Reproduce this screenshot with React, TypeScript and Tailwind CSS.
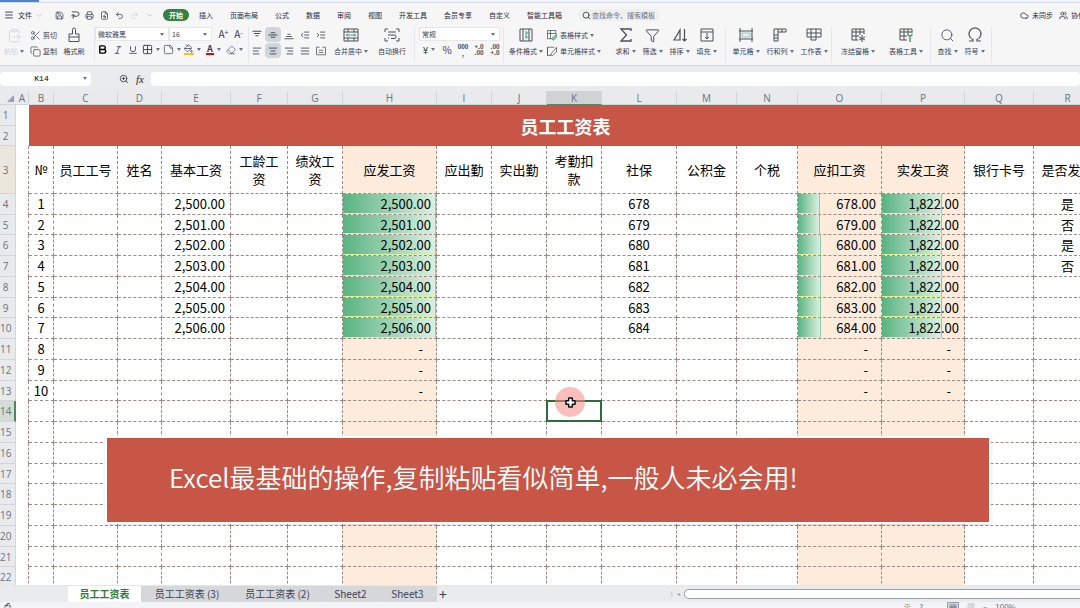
import type { ReactNode } from "react";
import {
  AlignCenter,
  AlignJustify,
  AlignLeft,
  AlignRight,
  Bold,
  ChevronDown,
  Cloud,
  Copy,
  Eraser,
  FileSearch,
  Filter,
  Grid2x2,
  Italic,
  ListIndentDecrease,
  ListIndentIncrease,
  Menu,
  PaintBucket,
  Printer,
  Redo2,
  Save,
  Scissors,
  Search,
  StickyNote,
  Underline,
  Undo2,
  Users,
  ZoomIn,
  ClipboardPaste,
} from "lucide-react";

type Row = {
  no?: string;
  base?: number;
  social?: number;
  deduct?: number;
  net?: number;
  issued?: string;
};

const MENUS = [
  "插入",
  "页面布局",
  "公式",
  "数据",
  "审阅",
  "视图",
  "开发工具",
  "会员专享",
  "自定义",
  "智能工具箱",
];

const COLUMNS = [
  { letter: "A", width: "w-[13px]", title: "" },
  { letter: "B", width: "w-[25px]", title: "№" },
  { letter: "C", width: "w-[64px]", title: "员工工号" },
  { letter: "D", width: "w-[44px]", title: "姓名" },
  { letter: "E", width: "w-[69px]", title: "基本工资" },
  { letter: "F", width: "w-[57px]", title: "工龄工资" },
  { letter: "G", width: "w-[55px]", title: "绩效工资" },
  { letter: "H", width: "w-[94px]", title: "应发工资" },
  { letter: "I", width: "w-[55px]", title: "应出勤" },
  { letter: "J", width: "w-[55px]", title: "实出勤" },
  { letter: "K", width: "w-[55px]", title: "考勤扣款" },
  { letter: "L", width: "w-[75px]", title: "社保" },
  { letter: "M", width: "w-[60px]", title: "公积金" },
  { letter: "N", width: "w-[61px]", title: "个税" },
  { letter: "O", width: "w-[84px]", title: "应扣工资" },
  { letter: "P", width: "w-[83px]", title: "实发工资" },
  { letter: "Q", width: "w-[69px]", title: "银行卡号" },
  { letter: "R", width: "w-[68px]", title: "是否发放" },
];

const BAR_MAX = 2506;
const ISSUED = ["是", "否", "是", "否"];

// sheet rows 4 to 22
const ROWS: Row[] = Array.from({ length: 19 }, (_, i) => {
  if (i < 7) {
    return {
      no: String(i + 1),
      base: 2500 + i,
      social: 678 + i,
      deduct: 678 + i,
      net: 1822,
      issued: ISSUED[i],
    };
  }
  if (i < 10) return { no: String(i + 1) };
  return {};
});

const money = (value: number) =>
  value.toLocaleString("en-US", { minimumFractionDigits: 2 });

const Caret = () => (
  <svg viewBox="0 0 4 3" className="h-[3px] w-1 shrink-0 fill-gray-500">
    <path d="M0 0h4L2 3z" />
  </svg>
);

const Drawing = ({
  children,
  className = "size-4",
}: {
  children: ReactNode;
  className?: string;
}) => (
  <svg
    viewBox="0 0 16 16"
    fill="none"
    stroke="#4b5055"
    strokeWidth="1"
    className={`shrink-0 ${className}`}
  >
    {children}
  </svg>
);

const Tool = ({
  label,
  width,
  caret = true,
  muted = false,
  children,
}: {
  label: string;
  width: string;
  caret?: boolean;
  muted?: boolean;
  children: ReactNode;
}) => (
  <button
    className={`flex shrink-0 flex-col items-center gap-[3px] ${width} ${
      muted ? "text-gray-300" : "text-gray-700"
    }`}
  >
    <span className="flex h-4 items-center">{children}</span>
    <span className="flex items-center gap-0.5 whitespace-nowrap leading-[10px]">
      {label}
      {caret && <Caret />}
    </span>
  </button>
);

const SmallTool = ({
  label,
  caret = false,
  children,
}: {
  label: string;
  caret?: boolean;
  children: ReactNode;
}) => (
  <button className="flex h-4 items-center gap-0.5 whitespace-nowrap text-gray-700">
    {children}
    {label}
    {caret && <Caret />}
  </button>
);

const IconButton = ({
  label,
  width = "w-4",
  caret = false,
  active = false,
  children,
}: {
  label: string;
  width?: string;
  caret?: boolean;
  active?: boolean;
  children: ReactNode;
}) => (
  <button
    aria-label={label}
    className={`flex h-[15px] shrink-0 items-center justify-center gap-[3px] rounded-sm ${width} ${
      active ? "bg-gray-300" : ""
    }`}
  >
    {children}
    {caret && <Caret />}
  </button>
);

const Picker = ({
  label,
  value,
  width,
}: {
  label: string;
  value: string;
  width: string;
}) => (
  <label
    className={`relative flex h-[14px] items-center border border-gray-200 bg-white ${width}`}
  >
    <select
      aria-label={label}
      className="w-full appearance-none bg-transparent pl-0.5 leading-3 outline-none"
    >
      <option>{value}</option>
    </select>
    <span className="pointer-events-none absolute right-1">
      <Caret />
    </span>
  </label>
);

const Divider = () => <div className="h-9 w-px shrink-0 bg-gray-200" />;

const MenuBar = () => (
  <nav className="flex h-6 items-center whitespace-nowrap text-[7px] text-gray-800">
    <button className="flex w-[52px] items-center gap-1 pl-1">
      <Menu className="size-[10px]" />
      文件
      <ChevronDown className="size-[7px] text-gray-400" />
    </button>
    <div className="flex w-[105px] items-center text-gray-700">
      <IconButton label="保存" width="w-[15px]">
        <Save className="size-[9px]" />
      </IconButton>
      <IconButton label="输出为PDF" width="w-[15px]">
        <Drawing className="size-[10px]">
          <path d="M3 3h7a4 3 0 010 7H5M5 7v7M2 10l3-3 3 3" strokeWidth="1.6" />
        </Drawing>
      </IconButton>
      <IconButton label="打印" width="w-[15px]">
        <Printer className="size-[9px]" />
      </IconButton>
      <IconButton label="打印预览" width="w-[15px]">
        <FileSearch className="size-[9px]" />
      </IconButton>
      <IconButton label="撤销" width="w-[15px]">
        <Undo2 className="size-[9px]" />
      </IconButton>
      <IconButton label="恢复" width="w-[15px]">
        <Redo2 className="size-[9px] text-gray-300" />
      </IconButton>
      <IconButton label="更多" width="w-[15px]">
        <ChevronDown className="size-[7px] text-gray-400" />
      </IconButton>
    </div>
    <button className="ml-1.5 h-3 w-[26px] rounded-full bg-[#35823f] font-bold text-white">
      开始
    </button>
    <div className="ml-[10px] flex gap-[17px]">
      {MENUS.map((menu) => (
        <button key={menu}>{menu}</button>
      ))}
    </div>
    <label className="ml-4 flex h-3 w-[82px] items-center gap-px rounded-full bg-[#eeefef] px-1">
      <Search className="size-[9px] shrink-0" />
      <input
        aria-label="查找命令"
        placeholder="查找命令、搜索模板"
        className="w-full bg-transparent outline-none placeholder:text-gray-500"
      />
    </label>
    <div className="ml-auto flex shrink-0 items-center">
      <button className="flex items-center gap-[3px]">
        <Cloud className="size-[9px]" />
        未同步
      </button>
      <button className="ml-1.5 flex w-[21px] items-center gap-[3px] overflow-hidden">
        <Users className="size-[9px] shrink-0" />
        协作
      </button>
    </div>
  </nav>
);

const Ribbon = () => (
  <div className="flex h-[38px] items-start overflow-hidden text-[7px] text-gray-700">
    {/* Clipboard */}
    <div className="flex w-[94px] shrink-0">
      <Tool label="粘贴" width="w-7" muted>
        <ClipboardPaste className="size-[15px]" strokeWidth={1.5} />
      </Tool>
      <div className="flex w-[34px] flex-col pl-0.5">
        <SmallTool label="剪切">
          <Scissors className="size-[11px]" strokeWidth={1.5} />
        </SmallTool>
        <SmallTool label="复制">
          <Copy className="size-[11px]" strokeWidth={1.5} />
        </SmallTool>
      </div>
      <Tool label="格式刷" width="w-6" caret={false}>
        <Drawing>
          <path d="M6.5 7V2.5a1.5 1.5 0 013 0V7H13v7.5H3V7zM3 10h10" />
        </Drawing>
      </Tool>
    </div>
    <Divider />
    {/* Font */}
    <div className="flex w-[153px] shrink-0 flex-col gap-px">
      <div className="flex items-center">
        <Picker label="字体" value="微软雅黑" width="w-[74px]" />
        <Picker label="字号" value="16" width="w-[43px]" />
        <button className="ml-1 w-[15px] text-[10px] leading-[14px]">
          A<sup className="text-[7px]">+</sup>
        </button>
        <button className="w-[15px] text-[10px] leading-[14px]">
          A<sup className="text-[7px]">-</sup>
        </button>
      </div>
      <div className="flex">
        <IconButton label="加粗" width="w-[15px]">
          <Bold className="size-[11px] text-black" strokeWidth={3} />
        </IconButton>
        <IconButton label="倾斜" width="w-[15px]">
          <Italic className="size-[10px]" />
        </IconButton>
        <IconButton label="下划线" width="w-[15px]">
          <Underline className="size-[10px]" />
        </IconButton>
        <IconButton label="边框" width="w-[21px]" caret>
          <Grid2x2 className="size-[11px]" />
        </IconButton>
        <IconButton label="单元格样式" width="w-[21px]" caret>
          <StickyNote className="size-[11px]" strokeWidth={1.5} />
        </IconButton>
        <IconButton label="填充颜色" width="w-[21px]" caret>
          <span className="flex flex-col">
            <PaintBucket className="size-[9px]" />
            <span className="h-0.5 w-[10px] bg-yellow-400" />
          </span>
        </IconButton>
        <IconButton label="字体颜色" width="w-[21px]" caret>
          <span className="border-b-2 border-red-600 px-px text-[9px] font-bold leading-[9px]">
            A
          </span>
        </IconButton>
        <IconButton label="清除" width="w-[21px]" caret>
          <Eraser className="size-[10px]" strokeWidth={1.5} />
        </IconButton>
      </div>
    </div>
    <Divider />
    {/* Alignment */}
    <div className="flex w-[165px] shrink-0">
      <div className="flex w-[81px] flex-col gap-px">
        <div className="flex">
          <IconButton label="顶端对齐">
            <Drawing className="size-3">
              <path d="M2 3h12M4 6h8M6 9h4" strokeWidth="1.5" />
            </Drawing>
          </IconButton>
          <IconButton label="垂直居中" active>
            <Drawing className="size-3">
              <path d="M2 8h12M5 5h6M5 11h6" strokeWidth="1.5" />
            </Drawing>
          </IconButton>
          <IconButton label="底端对齐">
            <Drawing className="size-3">
              <path d="M2 13h12M4 10h8M6 7h4" strokeWidth="1.2" />
            </Drawing>
          </IconButton>
          <IconButton label="减少缩进">
            <ListIndentDecrease className="size-[10px]" />
          </IconButton>
          <IconButton label="增加缩进">
            <ListIndentIncrease className="size-[10px]" />
          </IconButton>
        </div>
        <div className="flex">
          <IconButton label="左对齐">
            <AlignLeft className="size-[10px]" />
          </IconButton>
          <IconButton label="居中" active>
            <AlignCenter className="size-[10px]" />
          </IconButton>
          <IconButton label="右对齐">
            <AlignRight className="size-[10px]" />
          </IconButton>
          <IconButton label="两端对齐">
            <AlignJustify className="size-[10px]" />
          </IconButton>
          <IconButton label="分散对齐">
            <Drawing className="size-3">
              <path d="M6 3H2v10h12V3h-4M5 7h6M5 10h6" />
            </Drawing>
          </IconButton>
        </div>
      </div>
      <Tool label="合并居中" width="w-[42px]">
        <Drawing>
          <path d="M1 2h14v12H1zM1 5h14M1 11h14M5 2v3M11 2v3M5 11v3M11 11v3" />
          <path
            d="M3 8h10M5 6.5L3.5 8 5 9.5M11 6.5L12.5 8 11 9.5"
            stroke="#3f9a76"
          />
        </Drawing>
      </Tool>
      <Tool label="自动换行" width="w-10" caret={false}>
        <Drawing>
          <path d="M4 2H1v3M12 2h3v3M4 14H1v-3M12 14h3v-3M4 5h8M4 8h7a2 2 0 010 3.5H7M4 11h1" />
        </Drawing>
      </Tool>
    </div>
    <Divider />
    {/* Number */}
    <div className="flex w-[88px] shrink-0 flex-col gap-px pl-1">
      <Picker label="数字格式" value="常规" width="w-[81px]" />
      <div className="flex text-[10px]">
        <IconButton label="货币" width="w-5" caret>
          ¥
        </IconButton>
        <IconButton label="百分比">%</IconButton>
        <IconButton label="千位分隔">
          <span className="text-[6px] font-bold leading-[7px]">
            000
            <br />,
          </span>
        </IconButton>
        <IconButton label="增加小数位">
          <span className="text-right text-[6px] font-bold leading-[6px]">
            +.0
            <br />
            .00
          </span>
        </IconButton>
        <IconButton label="减少小数位">
          <span className="text-right text-[6px] font-bold leading-[6px]">
            .00
            <br />
            +.0
          </span>
        </IconButton>
      </div>
    </div>
    <Divider />
    {/* Styles */}
    <div className="flex w-[108px] shrink-0 pl-0.5">
      <Tool label="条件格式" width="w-10">
        <Drawing>
          <path d="M2 2h12v12H2zM5 2v12M11 2v12" />
          <path d="M8 4v8M8 6h3M8 10h3" stroke="#3f9a76" />
        </Drawing>
      </Tool>
      <div className="flex flex-col">
        <SmallTool label="表格样式" caret>
          <Drawing className="size-3">
            <path d="M2 2h11v5M2 2v11h5M2 6h11M6 2v11" />
            <path d="M7 13l7-6v4l-4 4z" fill="#8fc9ad" stroke="#3f9a76" />
          </Drawing>
        </SmallTool>
        <SmallTool label="单元格样式" caret>
          <Drawing className="size-3">
            <path d="M11 3H2v11h5M2 3v11" />
            <path d="M6 13l8-10v6l-5 5z" />
          </Drawing>
        </SmallTool>
      </div>
    </div>
    {/* Editing */}
    <div className="flex w-[113px] shrink-0">
      <Tool label="求和" width="w-[27px]">
        <Drawing>
          <path d="M13 4V2H3l5.500 6L3 14h10v-2" strokeWidth="1.3" />
        </Drawing>
      </Tool>
      <Tool label="筛选" width="w-[27px]">
        <Filter className="size-[15px]" strokeWidth={1.5} />
      </Tool>
      <Tool label="排序" width="w-[27px]">
        <Drawing>
          <path
            d="M2 13L8 3v10zM12.5 2v12M10.5 12l2 2 2-2"
            strokeWidth="1.2"
          />
        </Drawing>
      </Tool>
      <Tool label="填充" width="w-[27px]">
        <Drawing>
          <path d="M2 2h12v12H2zM2 5h12M8 6v6M6 10l2 2 2-2" />
        </Drawing>
      </Tool>
    </div>
    <Divider />
    {/* Cells */}
    <div className="flex w-[105px] shrink-0 pl-[3px]">
      <Tool label="单元格" width="w-[34px]">
        <Drawing>
          <path d="M2 1v14M14 1v14M1 4h14M1 12h14" />
          <path d="M4 6h8v4H4z" fill="#e5eff2" stroke="#9cc3c0" />
        </Drawing>
      </Tool>
      <Tool label="行和列" width="w-[34px]">
        <Drawing>
          <path d="M2 2h12v3H6v9H2zM6 2v3M10 2v3M2 8h4M2 11h4" />
        </Drawing>
      </Tool>
      <Tool label="工作表" width="w-[34px]">
        <Drawing>
          <path d="M1 2h14v8H1zM1 6h14M5 2v11h5V2" />
        </Drawing>
      </Tool>
    </div>
    <Divider />
    <div className="flex w-[98px] shrink-0 pl-0.5">
      <Tool label="冻结窗格" width="w-12">
        <Drawing>
          <path d="M8 13H2V2h12v5M2 5h12M6 2v11M10 2v6M2 9h7" />
          <path d="M12 8v7M9 10l6 3M15 10l-6 3" />
        </Drawing>
      </Tool>
      <Tool label="表格工具" width="w-12">
        <Drawing>
          <path d="M9 13H2V2h12v4M2 5h12M6 2v11M10 2v5M2 9h7" />
          <path d="M10 7a2 2 0 004 0M12 9v6" stroke="#3f9a76" strokeWidth="1.4" />
        </Drawing>
      </Tool>
    </div>
    <Divider />
    <div className="flex w-[60px] shrink-0 pl-[3px]">
      <Tool label="查找" width="w-[27px]">
        <Search className="size-[15px]" strokeWidth={1.3} />
      </Tool>
      <Tool label="符号" width="w-[27px]">
        <Drawing>
          <path d="M2 14h4v-1.5a6 6 0 114 0V14h4" strokeWidth="1.2" />
        </Drawing>
      </Tool>
    </div>
    <Divider />
  </div>
);

const FormulaBar = () => (
  <div className="flex h-[26px] items-center border-t border-gray-300 bg-[#e9ebec] py-[6px]">
    <label className="relative flex h-[14px] w-[91px] items-center rounded-sm bg-white">
      <input
        aria-label="名称框"
        defaultValue="K14"
        className="w-full bg-transparent pr-2 text-center font-['Liberation_Mono'] text-[8px] outline-none"
      />
      <span className="absolute right-1">
        <Caret />
      </span>
    </label>
    <button aria-label="浏览公式结果" className="ml-7">
      <ZoomIn className="size-[10px] text-gray-700" />
    </button>
    <button
      aria-label="插入函数"
      className="ml-1 mr-1 w-[14px] font-['Liberation_Serif'] text-[11px] italic leading-3 text-gray-800"
    >
      fx
    </button>
    <input
      aria-label="编辑栏"
      className="h-[14px] min-w-0 flex-1 rounded-sm bg-white text-[10px] outline-none"
    />
  </div>
);

const GRID = "border-r border-b border-dashed border-[#a18884]";

const DataBar = ({ value }: { value: number }) => (
  <div
    className="absolute inset-y-0 left-0 border-b border-r border-b-[#e3ee9c] border-r-[#8fcaa8] bg-linear-to-r from-[#57b382] to-[#d9f0e3]"
    style={{ width: `${Math.min(100, (value / BAR_MAX) * 100)}%` }}
  />
);

const AmountCell = ({ value, row }: { value?: number; row: Row }) => (
  <td className={`relative bg-[#fdebdc] text-right ${GRID}`}>
    {value !== undefined && <DataBar value={value} />}
    {value !== undefined ? (
      <span className="relative pr-[5px]">{money(value)}</span>
    ) : (
      row.no && <span className="pr-[13px]">-</span>
    )}
  </td>
);

const RowHeader = ({
  n,
  tint = "bg-[#e8eaec] border-r border-gray-300",
}: {
  n: number;
  tint?: string;
}) => (
  <th
    scope="row"
    className={`border-b pr-1 font-['Open_Sans'] text-[10px] font-normal leading-3 text-gray-500 ${tint}`}
  >
    {n}
  </th>
);

const SelectedCell = () => (
  <td className={`relative ${GRID}`}>
    <div className="absolute -inset-px border-2 border-[#2f6b3c]" />
    {/* Pointer highlight */}
    <div className="absolute -top-[14px] left-2 z-10 flex size-[30px] items-center justify-center rounded-full bg-[#f58a86]/55">
      <svg viewBox="0 0 12 12" className="size-[11px]">
        <path
          d="M4 1h4v3h3v4H8v3H4V8H1V4h3z"
          fill="#fff"
          stroke="#111"
          strokeWidth="1.6"
          strokeLinejoin="round"
        />
      </svg>
    </div>
  </td>
);

const SheetRow = ({ row, n }: { row: Row; n: number }) => (
  <tr className={n % 4 === 1 ? "h-5" : "h-[21px]"}>
    <RowHeader
      n={n}
      tint={
        n === 14
          ? "bg-[#d3ddd4] border-b-gray-300 border-r-2 border-r-[#4d8a5b]"
          : undefined
      }
    />
    <td className="border-r border-dashed border-[#a18884]" />
    <td className={GRID}>{row.no}</td>
    <td className={GRID} />
    <td className={GRID} />
    <td className={`pr-[5px] text-right ${GRID}`}>
      {row.base && money(row.base)}
    </td>
    <td className={GRID} />
    <td className={GRID} />
    <AmountCell value={row.base} row={row} />
    <td className={GRID} />
    <td className={GRID} />
    {n === 14 ? <SelectedCell /> : <td className={GRID} />}
    <td className={GRID}>{row.social}</td>
    <td className={GRID} />
    <td className={GRID} />
    <AmountCell value={row.deduct} row={row} />
    <AmountCell value={row.net} row={row} />
    <td className={GRID} />
    <td className={GRID}>{row.issued}</td>
  </tr>
);

const Sheet = () => (
  <div className="relative min-h-0 flex-1 overflow-hidden bg-white">
    <table className="w-[1102px] min-w-full table-fixed border-separate border-spacing-0 text-center text-[13px] leading-[18px] text-black">
      <colgroup>
        <col className="w-4" />
        {COLUMNS.map((col) => (
          <col key={col.letter} className={col.width} />
        ))}
      </colgroup>
      <thead>
        <tr className="h-[14px] bg-[#e8eaec] font-['Open_Sans'] text-[10px] leading-3 text-gray-500">
          <td className="border-b border-gray-300 p-0">
            <svg viewBox="0 0 8 8" className="ml-1.5 size-2 fill-gray-400">
              <path d="M8 1v7H1z" />
            </svg>
          </td>
          {COLUMNS.map((col) => (
            <th
              key={col.letter}
              scope="col"
              className={`border-b border-r border-gray-300 p-0 font-normal ${
                col.letter === "K" ? "border-b-[#5f7f66] bg-[#d0d2d4]" : ""
              }`}
            >
              {col.letter}
            </th>
          ))}
        </tr>
      </thead>
      <tbody className="[&_td]:py-0 [&_th]:py-0">
        <tr className="h-[21px]">
          <RowHeader n={1} />
          <td rowSpan={2} />
          <td
            colSpan={17}
            rowSpan={2}
            className="border border-[#d94c40] bg-[#c85647] text-[18px] font-bold text-white"
          >
            员工工资表
          </td>
        </tr>
        <tr className="h-5">
          <RowHeader n={2} />
        </tr>
        <tr className="h-12">
          <RowHeader n={3} tint="bg-[#ebe7dc] border-r border-gray-300" />
          {COLUMNS.map((col) => (
            <td
              key={col.letter}
              className={
                col.letter === "A"
                  ? "border-r border-dashed border-[#a18884]"
                  : `${GRID} ${
                      ["H", "O", "P"].includes(col.letter) ? "bg-[#fdebdc]" : ""
                    } ${
                      ["F", "G", "K"].includes(col.letter)
                        ? "px-1"
                        : "whitespace-nowrap"
                    }`
              }
            >
              {col.title}
            </td>
          ))}
        </tr>
        {ROWS.map((row, i) => (
          <SheetRow key={i} row={row} n={i + 4} />
        ))}
      </tbody>
    </table>
    {/* Caption over the grid */}
    <div className="absolute left-[105px] top-[345px] flex h-[88px] w-[886px] items-center border-2 border-white bg-[#c85647] pb-2 pl-[62px] text-[26px] font-[350] text-white shadow">
      Excel最基础的操作,复制粘贴看似简单,一般人未必会用!
    </div>
  </div>
);

const SHEET_TABS = [
  { name: "员工工资表 (3)", width: "w-[91px]" },
  { name: "员工工资表 (2)", width: "w-[90px]" },
  { name: "Sheet2", width: "w-14" },
  { name: "Sheet3", width: "w-[58px]" },
];

const SheetTabs = () => (
  <div className="flex h-[17px] items-stretch border-t border-gray-200 bg-[#e9ebec] text-[10px] leading-4 text-gray-700">
    <div className="w-[68px]" />
    <button className="w-[74px] border-r border-gray-300 bg-white font-bold text-[#2f7d32]">
      员工工资表
    </button>
    {SHEET_TABS.map((tab) => (
      <button
        key={tab.name}
        className={`border-r border-gray-300 bg-[#d6d7d9] ${tab.width}`}
      >
        {tab.name}
      </button>
    ))}
    <button aria-label="新建工作表" className="w-3 text-[14px]">
      +
    </button>
    <div className="ml-[222px] flex flex-1 items-center gap-1 text-[6px] text-gray-400">
      <span>|</span>
      <span>◂</span>
      <div className="h-[10px] flex-1 rounded-l-full border border-r-0 border-gray-400 bg-white" />
    </div>
  </div>
);

const StatusBar = () => (
  <footer className="flex h-[6px] items-start overflow-hidden bg-[#f3f4f5] text-[8px] leading-[10px] text-gray-500">
    <span className="ml-1 text-[9px] text-gray-700">⎙</span>
    <div className="ml-auto flex gap-2 pr-[64px]">
      <span>※</span>
      <span>?</span>
      <span className="ml-4 flex h-3 w-3 items-center justify-center border border-gray-400 bg-gray-300 text-gray-800">
        ▦
      </span>
      <span>▥</span>
      <span>–</span>
      <span>100%</span>
    </div>
  </footer>
);

const App = () => {
  return (
    <div className="flex h-screen flex-col overflow-hidden bg-[#f6f6f7] font-['Noto_Sans_CJK_SC',sans-serif]">
      <div className="flex h-[3px] shrink-0 border-b border-[#d5dbe6] bg-[#f3f5fa]">
        <div className="w-[39px] bg-[#4a86cf]" />
      </div>
      <MenuBar />
      <Ribbon />
      <FormulaBar />
      <Sheet />
      <SheetTabs />
      <StatusBar />
    </div>
  );
};

export default App;
